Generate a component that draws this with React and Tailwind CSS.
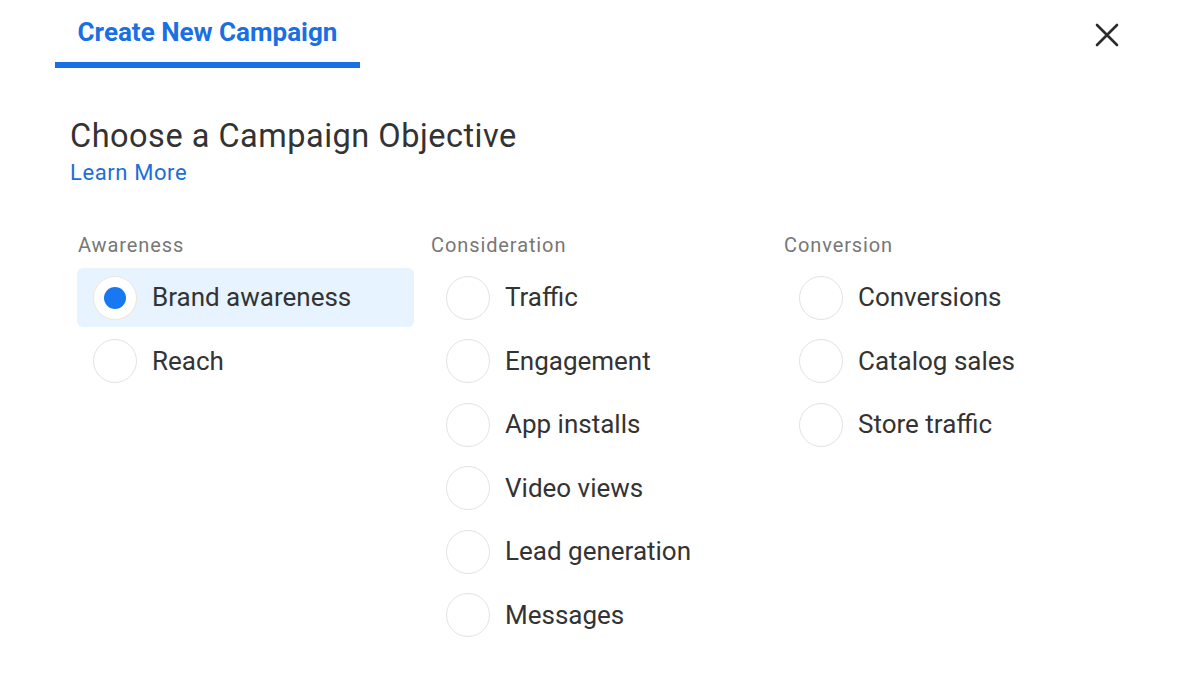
import React from "react";

const columns = [
  { title: "Awareness", items: ["Brand awareness", "Reach"] },
  {
    title: "Consideration",
    items: ["Traffic", "Engagement", "App installs", "Video views", "Lead generation", "Messages"],
  },
  { title: "Conversion", items: ["Conversions", "Catalog sales", "Store traffic"] },
];

function Radio({ checked }) {
  return (
    <div
      className={
        "flex h-[44px] w-[44px] shrink-0 items-center justify-center rounded-full bg-white border " +
        (checked ? "border-[#efe6d6]" : "border-[#e3e3e3]")
      }
    >
      {checked && <div className="h-[22px] w-[22px] rounded-full bg-[#1877f2]" />}
    </div>
  );
}

export default function App() {
  return (
    <div
      className="h-[675px] w-[1200px] bg-white text-[#1c1e21]"
      style={{ fontFamily: "Roboto, 'Noto Sans', sans-serif" }}
    >
      <div className="flex items-start justify-between pl-[55px] pr-[80px]">
        <div className="flex w-[305px] flex-col items-center">
          <div className="flex h-[62px] items-center pt-[3px] text-[26px] font-bold text-[#1a6fe3]">
            Create New Campaign
          </div>
          <div className="h-[6px] w-full bg-[#1a6fe3]" />
        </div>
        <div className="mt-[22px] flex h-[26px] w-[26px] items-center justify-center">
          <svg width="26" height="26" viewBox="0 0 26 26" fill="none">
            <path d="M3 3L23 23M23 3L3 23" stroke="#2b2b2b" strokeWidth="2.6" strokeLinecap="round" />
          </svg>
        </div>
      </div>

      <div className="pl-[70px] pt-[48px]">
        <div className="text-[32.5px] leading-[40px] tracking-[0.5px] text-[#333333]">
          Choose a Campaign Objective
        </div>
        <div className="mt-[3px] text-[22px] leading-[28px] tracking-[0.6px] text-[#1a6fd6]">Learn More</div>
      </div>

      <div className="mt-[46px] flex gap-[16px] pl-[77px]">
        {columns.map((col, ci) => (
          <div key={col.title} className="flex w-[337px] flex-col">
            <div className="pl-[1px] text-[20px] leading-[24px] tracking-[0.9px] text-[#777777]">
              {col.title}
            </div>
            <div className="mt-[11px] flex flex-col gap-[4.6px]">
              {col.items.map((item, ii) => {
                const checked = ci === 0 && ii === 0;
                return (
                  <div
                    key={item}
                    className={
                      "flex h-[59px] items-center gap-[15px] rounded-[6px] pl-[16px] " +
                      (checked ? "bg-[#e7f3ff]" : "")
                    }
                  >
                    <Radio checked={checked} />
                    <span className="text-[26px] text-[#333333]">{item}</span>
                  </div>
                );
              })}
            </div>
          </div>
        ))}
      </div>
    </div>
  );
}
